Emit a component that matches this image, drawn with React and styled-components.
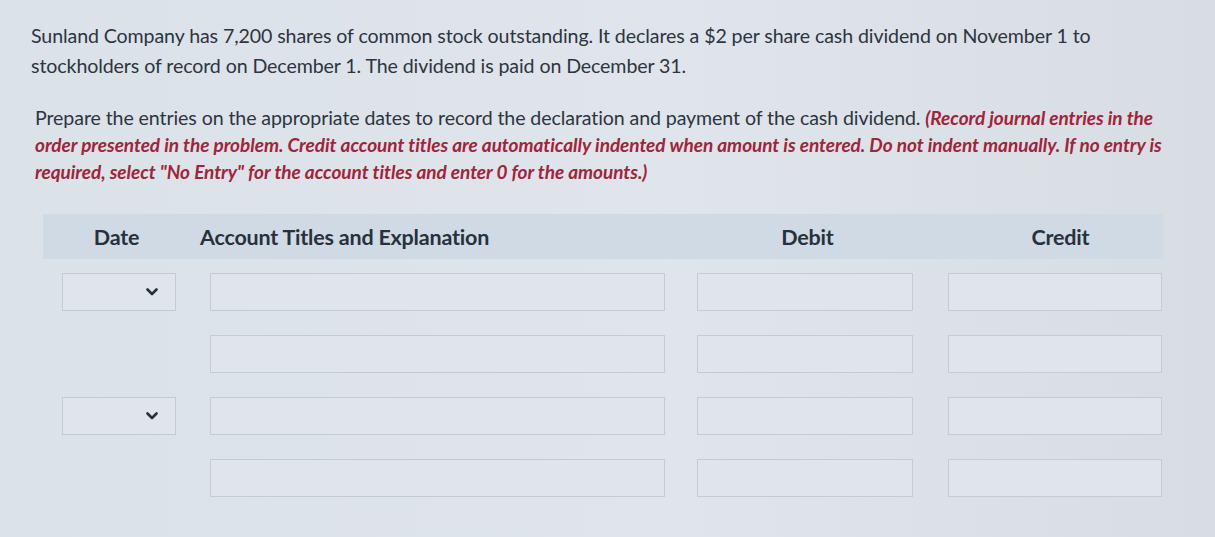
import React from "react";
import styled, { createGlobalStyle } from "styled-components";

const Global = createGlobalStyle`
  html, body {
    margin: 0;
    padding: 0;
    background: #dce3e9;
  }
  body {
    font-family: Lato, "Open Sans", sans-serif;
    color: #2c3540;
  }
`;

const Page = styled.div`
  width: 1215px;
  height: 537px;
  box-sizing: border-box;
  padding: 21px 0 0 31px;
  background: linear-gradient(90deg, #dbe2e8 0%, #dfe5ea 55%, #d7dde2 100%);
  overflow: hidden;
`;

const Para = styled.p`
  margin: 0 0 ${(p) => p.$gap || 0}px ${(p) => p.$indent || 0}px;
  width: 1150px;
  font-size: 19.6px;
  line-height: ${(p) => p.$lh || 30}px;
  letter-spacing: -0.1px;
`;

const Note = styled.em`
  color: #a2233a;
  font-size: 19px;
  font-weight: 700;
  font-style: italic;
  letter-spacing: -0.05px;
`;

const Table = styled.div`
  margin: 29px 0 0 12px;
  width: 1120px;
`;

const Grid = styled.div`
  display: grid;
  grid-template-columns: 147px 495px 245px 233px;
  align-items: center;
`;

const Head = styled(Grid)`
  height: 45px;
  background: #cfdae5;
`;

const HeadCell = styled.div`
  font-size: 21.5px;
  font-weight: 700;
  color: #27313d;
  letter-spacing: -0.2px;
  text-align: ${(p) => p.$align || "center"};
  padding-left: ${(p) => p.$pad || 0}px;
`;

const Body = styled.div`
  display: flex;
  flex-direction: column;
  gap: 24px;
  margin-top: 14px;
`;

const Row = styled(Grid)`
  height: 38px;
`;

const Field = styled.div`
  box-sizing: border-box;
  height: 38px;
  width: ${(p) => p.$w}px;
  margin-left: ${(p) => p.$ml}px;
  border: 1px solid #c4cbd1;
  background: #dfe5ea;
`;

const Select = styled(Field)`
  display: flex;
  align-items: center;
  justify-content: flex-end;
  padding-right: 17px;
`;

const Chevron = () => (
  <svg width="12" height="8" viewBox="0 0 12 8">
    <polyline
      points="1.5,1.5 6,6 10.5,1.5"
      fill="none"
      stroke="#27313d"
      strokeWidth="2.6"
      strokeLinecap="round"
      strokeLinejoin="round"
    />
  </svg>
);

const rows = [{ date: true }, { date: false }, { date: true }, { date: false }];

export default function App() {
  return (
    <Page>
      <Global />
      <Para $gap={23}>
        Sunland Company has 7,200 shares of common stock outstanding. It declares a $2 per share cash
        dividend on November 1 to
        <br />
        stockholders of record on December 1. The dividend is paid on December 31.
      </Para>
      <Para $lh={27} $indent={4}>
        Prepare the entries on the appropriate dates to record the declaration and payment of the cash
        dividend.{" "}
        <Note>
          (Record journal entries in the
          <br />
          order presented in the problem. Credit account titles are automatically indented when amount is
          entered. Do not indent manually. If no entry is
          <br />
          required, select "No Entry" for the account titles and enter 0 for the amounts.)
        </Note>
      </Para>
      <Table>
        <Head>
          <HeadCell>Date</HeadCell>
          <HeadCell $align="left" $pad={10}>Account Titles and Explanation</HeadCell>
          <HeadCell>Debit</HeadCell>
          <HeadCell $pad={28}>Credit</HeadCell>
        </Head>
        <Body>
          {rows.map((r, i) => (
            <Row key={i}>
              {r.date ? (
                <Select $w={114} $ml={19}>
                  <Chevron />
                </Select>
              ) : (
                <div />
              )}
              <Field $w={455} $ml={20} />
              <Field $w={216} $ml={12} />
              <Field $w={214} $ml={18} />
            </Row>
          ))}
        </Body>
      </Table>
    </Page>
  );
}
